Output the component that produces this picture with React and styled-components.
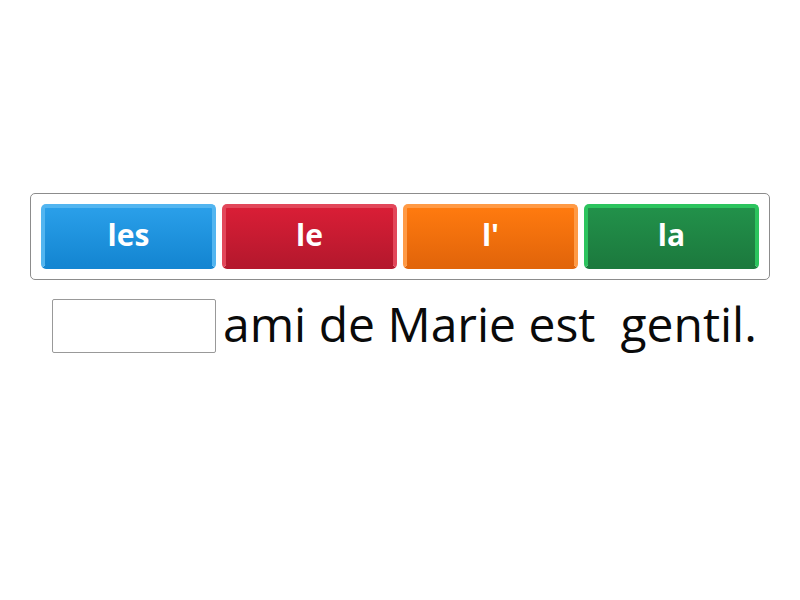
import React from 'react';
import styled, { createGlobalStyle } from 'styled-components';

const GlobalStyle = createGlobalStyle`
    html, body {
        margin: 0;
        padding: 0;
        background: #fff;
        font-family: 'Open Sans', 'Liberation Sans', sans-serif;
    }
`;

const Page = styled.div`
    width: 800px;
    height: 600px;
    box-sizing: border-box;
    padding-top: 193px;
    padding-left: 30px;
`;

const Tray = styled.div`
    width: 740px;
    height: 87px;
    box-sizing: border-box;
    border: 1px solid #8c8c8c;
    border-radius: 5px;
    padding: 10px 10px 0 10px;
    display: flex;
    gap: 6px;
`;

const colors = {
    blue: { base: '#2a9fe9', light: '#52b5f0', dark: '#1486d2' },
    red: { base: '#d91e36', light: '#e2475a', dark: '#b5182d' },
    orange: { base: '#ff7a0f', light: '#ff9a45', dark: '#e2650a' },
    green: { base: '#22914a', light: '#2cc45e', dark: '#1c7a3e' },
};

const Tile = styled.button`
    width: 175px;
    height: 65px;
    box-sizing: border-box;
    border-radius: 5px;
    border: 4px solid ${(p) => colors[p.$tone].light};
    border-bottom: 4px solid ${(p) => colors[p.$tone].dark};
    background: linear-gradient(
        to bottom,
        ${(p) => colors[p.$tone].base},
        ${(p) => colors[p.$tone].dark}
    );
    color: #fff;
    font-family: 'Open Sans', 'Liberation Sans', sans-serif;
    font-weight: 700;
    font-size: 30px;
    line-height: 1;
    display: flex;
    align-items: center;
    justify-content: center;
    padding: 0 0 4px 0;
    cursor: pointer;
`;

const Sentence = styled.div`
    display: flex;
    align-items: center;
    margin-top: 19px;
    margin-left: 22px;
    gap: 7px;
`;

const Blank = styled.div`
    width: 164px;
    height: 54px;
    box-sizing: border-box;
    border: 1px solid #999;
    border-radius: 2px;
    background: #fff;
`;

const Words = styled.span`
    font-size: 48px;
    color: #0a0a0a;
    line-height: 54px;
    white-space: nowrap;
    margin-top: -5px;
`;

const Row = styled.div`
    display: flex;
    gap: 25px;
`;

export default function App() {
    return (
        <>
            <GlobalStyle />
            <Page>
                <Tray>
                    <Tile $tone="blue">les</Tile>
                    <Tile $tone="red">le</Tile>
                    <Tile $tone="orange">l'</Tile>
                    <Tile $tone="green">la</Tile>
                </Tray>
                <Sentence>
                    <Blank />
                    <Row>
                        <Words>ami de Marie est</Words>
                        <Words>gentil.</Words>
                    </Row>
                </Sentence>
            </Page>
        </>
    );
}
